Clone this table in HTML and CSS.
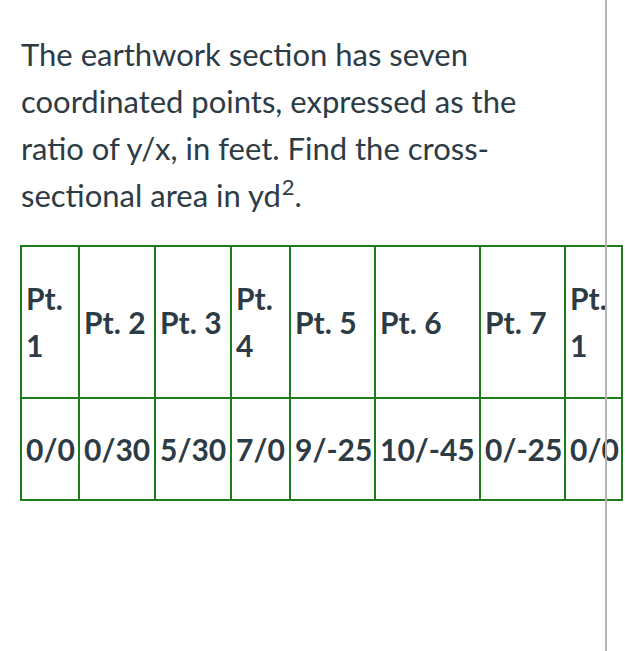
FILE: index.html
```html
<!DOCTYPE html>
<html lang="en">
<head>
<meta charset="utf-8">
<title>Earthwork section</title>
<link rel="stylesheet" href="styles.css">
</head>
<body>
<div class="page">
  <p class="question">The earthwork section has seven coordinated points, expressed as the ratio of y/x, in feet. Find the cross-sectional area in yd<sup>2</sup>.</p>
  <table class="points">
    <colgroup>
      <col class="c1"><col class="c2"><col class="c3"><col class="c4"><col class="c5"><col class="c6"><col class="c7"><col class="c8">
    </colgroup>
    <tr class="head">
      <td>Pt. 1</td><td>Pt. 2</td><td>Pt. 3</td><td>Pt. 4</td><td>Pt. 5</td><td>Pt. 6</td><td>Pt. 7</td><td>Pt. 1</td>
    </tr>
    <tr class="data">
      <td>0/0</td><td>0/30</td><td>5/30</td><td>7/0</td><td>9/-25</td><td>10/-45</td><td>0/-25</td><td>0/0</td>
    </tr>
  </table>
</div>
</body>
</html>
```

FILE: styles.css
```css
html, body {
  margin: 0;
  padding: 0;
  background: #ffffff;
}

body {
  font-family: Lato, "Noto Sans", sans-serif;
  color: #2d3b45;
  overflow: hidden;
}

.page {
  position: relative;
  width: 585px;
  min-height: 651px;
  padding: 31px 0 0 20px;
  box-sizing: border-box;
}

.page::after {
  content: "";
  position: absolute;
  top: 0;
  bottom: 0;
  left: 605px;
  width: 2px;
  background: #b4b4b4;
}

.question {
  margin: 0 0 26px 1px;
  font-size: 31px;
  line-height: 47px;
  width: 545px;
}

.question sup {
  font-size: 22px;
  line-height: 0;
  vertical-align: 12px;
  margin-left: 1px;
}

.points {
  border-collapse: collapse;
  table-layout: fixed;
  width: 601px;
  font-size: 30px;
  line-height: 47px;
  font-weight: 700;
  color: #2d3b45;
}

.points td {
  border: 2px solid #1c7c1c;
  padding: 0 4px;
  vertical-align: middle;
  text-align: left;
}

.c1 { width: 58px; }
.c2 { width: 76px; }
.c3 { width: 76px; }
.c4 { width: 59px; }
.c5 { width: 85px; }
.c6 { width: 105px; }
.c7 { width: 85px; }
.c8 { width: 57px; }

.head td {
  height: 150px;
}

.data td {
  height: 100px;
  white-space: nowrap;
}
```
